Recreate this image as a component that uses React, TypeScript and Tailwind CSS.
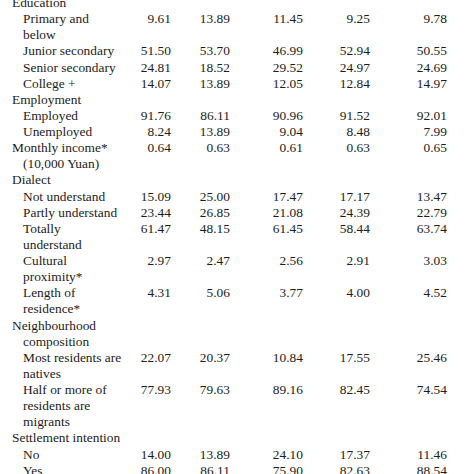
type Row = {
  lines: string[]
  sub?: boolean
  values?: string[]
}

const ROWS: Row[] = [
  { lines: ['Education'] },
  { lines: ['Primary and', 'below'], sub: true, values: ['9.61', '13.89', '11.45', '9.25', '9.78'] },
  { lines: ['Junior secondary'], sub: true, values: ['51.50', '53.70', '46.99', '52.94', '50.55'] },
  { lines: ['Senior secondary'], sub: true, values: ['24.81', '18.52', '29.52', '24.97', '24.69'] },
  { lines: ['College +'], sub: true, values: ['14.07', '13.89', '12.05', '12.84', '14.97'] },
  { lines: ['Employment'] },
  { lines: ['Employed'], sub: true, values: ['91.76', '86.11', '90.96', '91.52', '92.01'] },
  { lines: ['Unemployed'], sub: true, values: ['8.24', '13.89', '9.04', '8.48', '7.99'] },
  { lines: ['Monthly income*', '(10,000 Yuan)'], values: ['0.64', '0.63', '0.61', '0.63', '0.65'] },
  { lines: ['Dialect'] },
  { lines: ['Not understand'], sub: true, values: ['15.09', '25.00', '17.47', '17.17', '13.47'] },
  { lines: ['Partly understand'], sub: true, values: ['23.44', '26.85', '21.08', '24.39', '22.79'] },
  { lines: ['Totally', 'understand'], sub: true, values: ['61.47', '48.15', '61.45', '58.44', '63.74'] },
  { lines: ['Cultural', 'proximity*'], sub: true, values: ['2.97', '2.47', '2.56', '2.91', '3.03'] },
  { lines: ['Length of', 'residence*'], sub: true, values: ['4.31', '5.06', '3.77', '4.00', '4.52'] },
  { lines: ['Neighbourhood', 'composition'] },
  { lines: ['Most residents are', 'natives'], sub: true, values: ['22.07', '20.37', '10.84', '17.55', '25.46'] },
  { lines: ['Half or more of', 'residents are', 'migrants'], sub: true, values: ['77.93', '79.63', '89.16', '82.45', '74.54'] },
  { lines: ['Settlement intention'] },
  { lines: ['No'], sub: true, values: ['14.00', '13.89', '24.10', '17.37', '11.46'] },
  { lines: ['Yes'], sub: true, values: ['86.00', '86.11', '75.90', '82.63', '88.54'] },
]

function Label({ row }: { row: Row }) {
  // category rows hang their wrapped lines at the sub-item indent
  return (
    <div className="flex flex-col">
      {row.lines.map((line, i) => (
        <span key={i} className={row.sub || i > 0 ? 'pl-[23px]' : 'pl-[12px]'}>
          {line}
        </span>
      ))}
    </div>
  )
}

export default function App() {
  return (
    <div className="w-[474px] h-[474px] overflow-hidden bg-white text-[#1c1c1c]">
      <div
        className="mt-[-5px] flex flex-col text-[13.4px] leading-[16.13px] whitespace-nowrap"
        style={{ fontFamily: '"Liberation Serif", "Times New Roman", serif' }}
      >
        {ROWS.map((row, i) => (
          <div key={i} className="grid grid-cols-[122px_49px_59px_73px_67px_77px] items-start">
            <Label row={row} />
            {(row.values ?? ['', '', '', '', '']).map((v, j) => (
              <span key={j} className="text-right">
                {v}
              </span>
            ))}
          </div>
        ))}
      </div>
    </div>
  )
}
